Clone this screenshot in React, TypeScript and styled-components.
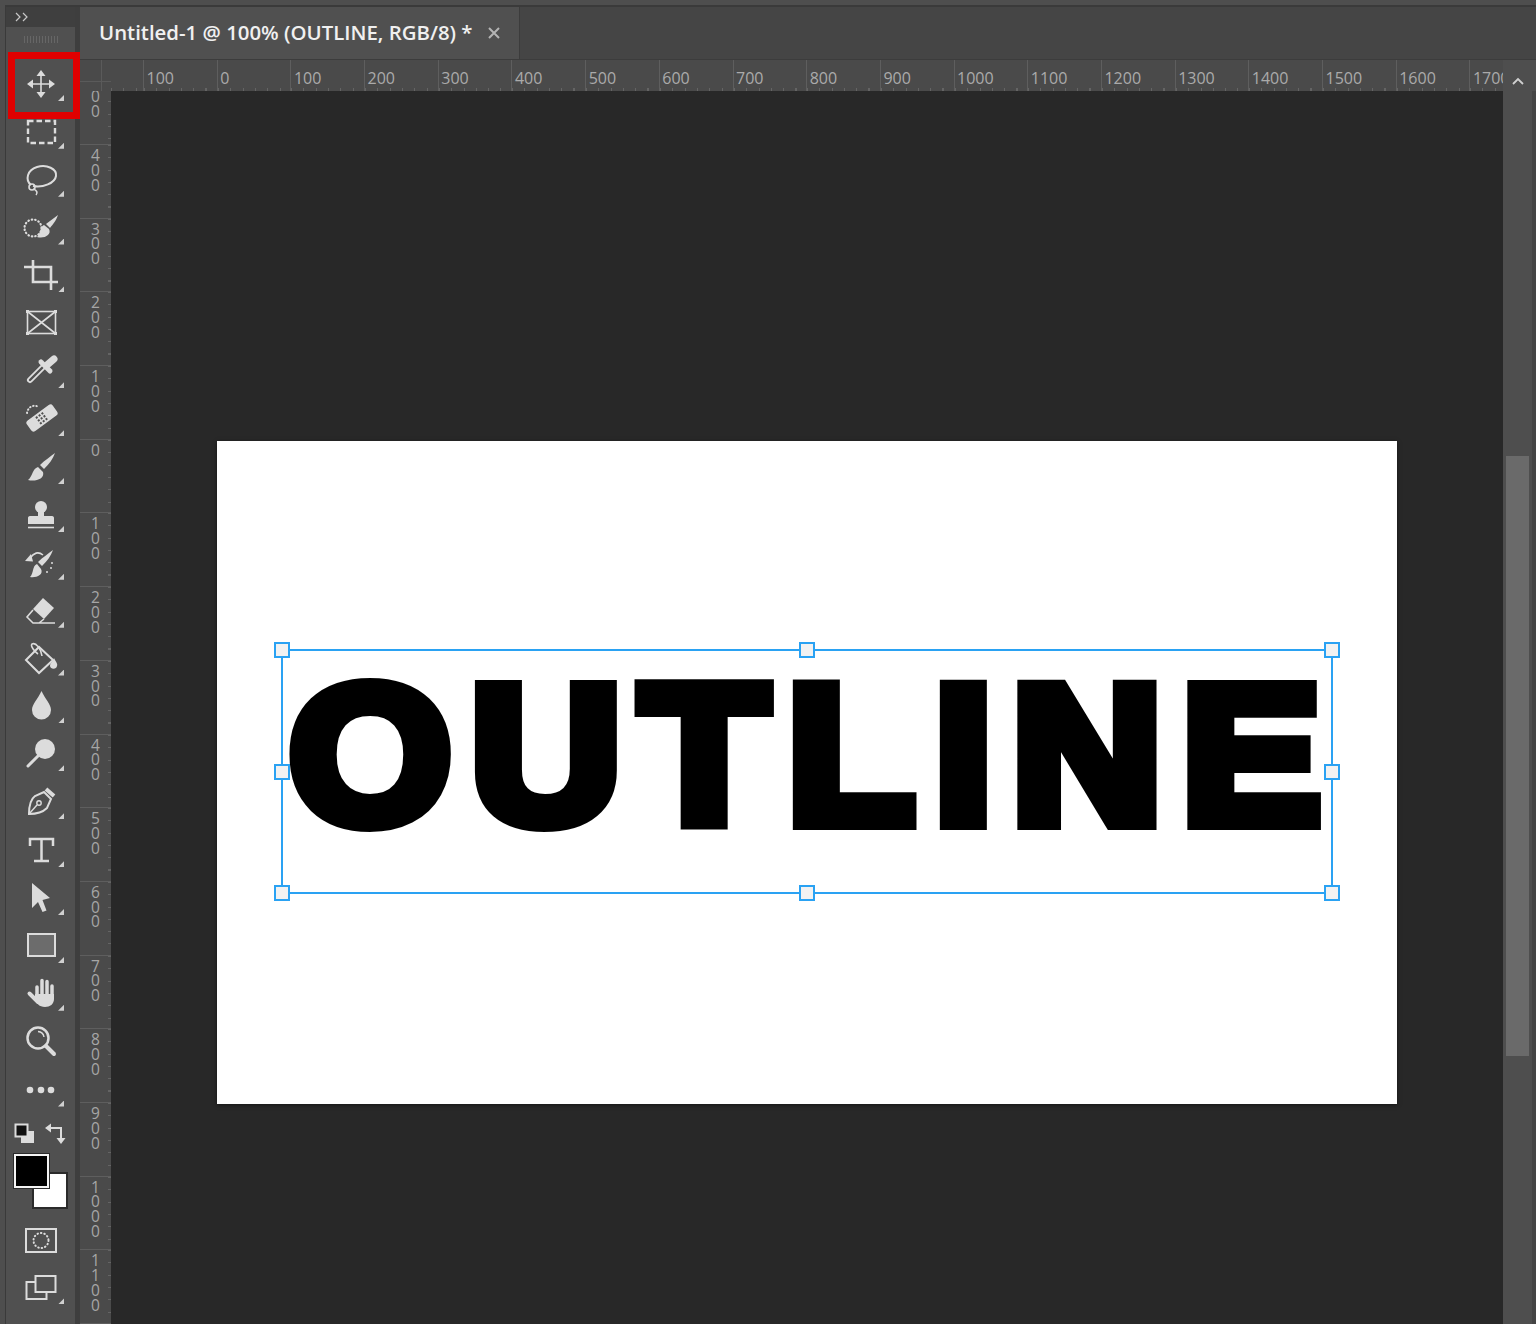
import React from "react";
import styled, { createGlobalStyle } from "styled-components";

const ink = "#dcdcdc";
const panel = "#505050";

const GlobalStyle = createGlobalStyle`
  html, body {
    margin: 0;
    padding: 0;
    background: #4e4e4e;
    font-family: "Open Sans", "Liberation Sans", sans-serif;
  }
`;

const Shell = styled.div`
  width: 1536px;
  height: 1324px;
  overflow: hidden;
  padding: 5px 0 0 5px;
  box-sizing: border-box;
  background: #4e4e4e;
`;

const Frame = styled.div`
  display: flex;
  height: 100%;
  border-top: 2px solid #3a3a3a;
  border-left: 1px solid #3a3a3a;
`;

const Toolbar = styled.aside`
  width: 69px;
  flex: none;
  background: ${panel};
  border-right: 5px solid #3e3e3e;
  display: flex;
  flex-direction: column;
`;

const ToolHeader = styled.div`
  height: 20px;
  flex: none;
  background: #3f3f3f;
  padding-left: 9px;
  box-sizing: border-box;
  display: flex;
  align-items: center;
`;

const Grip = styled.div`
  height: 33px;
  flex: none;
  display: flex;
  justify-content: center;
  padding-top: 9px;
  box-sizing: border-box;
  &::before {
    content: "";
    width: 34px;
    height: 7px;
    background: repeating-linear-gradient(90deg, #666 0 1px, transparent 1px 3px);
  }
`;

const Tool = styled.div<{ $more?: boolean; $selected?: boolean }>`
  position: relative;
  height: 47.9px;
  flex: none;
  display: flex;
  align-items: center;
  justify-content: center;
  &::after {
    content: "";
    display: ${(p) => (p.$more ? "block" : "none")};
    position: absolute;
    right: 11px;
    bottom: 7px;
    width: 6px;
    height: 6px;
    background: #d0d0d0;
    clip-path: polygon(100% 0, 100% 100%, 0 100%);
  }
  &::before {
    content: "";
    display: ${(p) => (p.$selected ? "block" : "none")};
    position: absolute;
    left: 2px;
    top: -8px;
    width: 72px;
    height: 67px;
    box-sizing: border-box;
    border: 7px solid #e00000;
    z-index: 3;
  }
`;

const Glyph = styled.svg`
  width: 36px;
  height: 36px;
  display: block;
`;

const ColorIcons = styled.div`
  height: 38px;
  flex: none;
  display: flex;
  align-items: center;
  justify-content: space-between;
  padding: 3px 9px 0 8px;
  box-sizing: border-box;
`;

const Swatches = styled.div`
  height: 58px;
  margin: 0 0 6px 8px;
  flex: none;
`;

const Swatch = styled.div<{ $back?: boolean }>`
  position: relative;
  box-sizing: border-box;
  width: ${(p) => (p.$back ? "36px" : "35px")};
  height: ${(p) => (p.$back ? "37px" : "34px")};
  margin: ${(p) => (p.$back ? "-16px 0 0 18px" : "2px 0 0 0")};
  z-index: ${(p) => (p.$back ? 1 : 2)};
  background: ${(p) => (p.$back ? "#fff" : "#000")};
  border: 2px solid ${(p) => (p.$back ? "#2b2b2b" : "#f4f4f4")};
  outline: ${(p) => (p.$back ? "none" : "1px solid #2b2b2b")};
`;

const Main = styled.main`
  flex: 1;
  min-width: 0;
  display: flex;
  flex-direction: column;
`;

const TabBar = styled.div`
  height: 53px;
  flex: none;
  background: #454545;
  display: flex;
  border-bottom: 1px solid #3c3c3c;
  box-sizing: border-box;
`;

const Tab = styled.div`
  width: 440px;
  box-sizing: border-box;
  background: #505050;
  border-right: 1px solid #3c3c3c;
  display: flex;
  align-items: center;
  padding: 0 18px 2px 19px;
  justify-content: space-between;
`;

const TabTitle = styled.span`
  color: #f0f0f0;
  font-size: 20.4px;
  font-weight: 600;
  white-space: nowrap;
`;

const TabClose = styled.svg`
  width: 14px;
  height: 14px;
  margin-top: 2px;
`;

const RulerRow = styled.div`
  height: 31px;
  flex: none;
  display: flex;
  background: #4a4a4a;
`;

const RulerCorner = styled.div`
  width: 31px;
  flex: none;
  background:
    linear-gradient(#5a5a5a, #5a5a5a) 21px 0 / 1px 100% no-repeat,
    linear-gradient(#5a5a5a, #5a5a5a) 0 21px / 100% 1px no-repeat;
`;

const RulerTrack = styled.div`
  flex: 1;
  min-width: 0;
  display: flex;
  overflow: hidden;
`;

const RulerCell = styled.div<{ $lead?: boolean }>`
  flex: none;
  width: ${(p) => (p.$lead ? "32px" : "73.7px")};
  box-sizing: border-box;
  padding: 5px 0 0 2.5px;
  color: #aaaaaa;
  font-size: 16px;
  line-height: 26px;
  border-left: ${(p) => (p.$lead ? "none" : "1px solid #5e5e5e")};
  background: repeating-linear-gradient(90deg, #646464 0 1px, transparent 1px 12.3px) 0 100% / 100% 3px no-repeat;
`;

const ScrollUp = styled.div`
  width: 33px;
  flex: none;
  background: #4e4e4e;
  padding: 9px 0 0 8px;
  box-sizing: border-box;
`;

const Work = styled.div`
  flex: 1;
  min-height: 0;
  display: flex;
`;

const VRuler = styled.div`
  width: 31px;
  flex: none;
  background: #4a4a4a;
  overflow: hidden;
`;

const VCell = styled.div<{ $lead?: boolean }>`
  height: ${(p) => (p.$lead ? "56px" : "73.7px")};
  margin-top: ${(p) => (p.$lead ? "-2px" : "0")};
  box-sizing: border-box;
  border-bottom: 1px solid #5e5e5e;
  display: flex;
  flex-direction: column;
  align-items: center;
  padding: ${(p) => (p.$lead ? "0" : "3px")} 0 0 0;
  background: repeating-linear-gradient(180deg, #646464 0 1px, transparent 1px 12.3px) 100% 0 / 3px 100% no-repeat;
`;

const VDigit = styled.span`
  display: block;
  color: #a6a6a6;
  font-size: 15.5px;
  line-height: 14.8px;
  height: 14.8px;
`;

const Canvas = styled.div`
  flex: 1;
  min-width: 0;
  background: #282828;
  display: flex;
  justify-content: center;
  align-items: flex-start;
  padding-top: 350px;
`;

const Doc = styled.div`
  width: 1180px;
  height: 663px;
  flex: none;
  background: #fff;
  box-sizing: border-box;
  padding: 208px 0 0 64px;
  box-shadow: 0 1px 4px rgba(0, 0, 0, 0.5);
`;

const TextBox = styled.div`
  position: relative;
  width: 1052px;
  height: 245px;
  box-sizing: border-box;
  border: 2px solid #2aa2f3;
`;

const Outline = styled.div`
  color: #000;
  font-family: "Liberation Sans", Arial, sans-serif;
  font-weight: 700;
  font-size: 194px;
  line-height: 208px;
  letter-spacing: 18.7px;
  white-space: nowrap;
  -webkit-text-stroke: 16px #000;
  transform: scaleX(1.07);
  transform-origin: 0 0;
  padding: 0 0 0 6px;
`;

const Handle = styled.span<{ $x: number; $y: number }>`
  position: absolute;
  left: calc(${(p) => p.$x * 50}% + ${(p) => p.$x - 1}px);
  top: calc(${(p) => p.$y * 50}% + ${(p) => p.$y - 1}px);
  width: 16px;
  height: 16px;
  margin: -8px 0 0 -8px;
  box-sizing: border-box;
  background: #f2f2f2;
  border: 2px solid #2aa2f3;
`;

const Scrollbar = styled.div`
  width: 33px;
  flex: none;
  box-sizing: border-box;
  background: #4e4e4e;
  border-right: 4px solid #444;
  padding: 365px 3px 0 3px;
`;

const Thumb = styled.div`
  height: 600px;
  background: #6a6a6a;
`;

const s = { fill: "none", stroke: ink, strokeWidth: 2 };
const f = { fill: ink };

const tools: { more: boolean; icon: React.ReactNode }[] = [
  {
    more: true,
    icon: (
      <>
        <path d="M18 6v24M6 18h24" {...s} strokeWidth={1.6} />
        <polygon points="18,4 13.5,10 22.5,10" {...f} />
        <polygon points="18,32 13.5,26 22.5,26" {...f} />
        <polygon points="4,18 10,13.5 10,22.5" {...f} />
        <polygon points="32,18 26,13.5 26,22.5" {...f} />
      </>
    ),
  },
  { more: true, icon: <rect x="5" y="7" width="27" height="22" {...s} strokeWidth={2.4} strokeDasharray="5.5 3" /> },
  {
    more: true,
    icon: (
      <>
        <path d="M8 23C2 18 4 8 14 5C24 2 34 7 33 14C32 21 20 26 10 24" {...s} />
        <circle cx="9" cy="25" r="3" {...s} strokeWidth={1.6} />
        <path d="M10 27C14 28 15 31 13 33" {...s} strokeWidth={1.6} />
      </>
    ),
  },
  {
    more: true,
    icon: (
      <>
        <circle cx="10" cy="18" r="8.5" {...s} strokeWidth={2.2} strokeLinecap="round" strokeDasharray="0.5 3" />
        <path d="M35 5C33 11 30 14 27 18L23 14C27 11 31 8 35 5Z" {...f} />
        <path d="M21 15C17 16 18 23 14 27C21 29 29 25 26 19Z" {...f} />
      </>
    ),
  },
  {
    more: true,
    icon: <path d="M0 10H27V33M9 3V25H34" {...s} strokeWidth={2.6} transform="translate(1 -1)" />,
  },
  {
    more: false,
    icon: (
      <>
        <rect x="4.5" y="6.5" width="28" height="22" {...s} strokeWidth={1.6} />
        <path d="M4.5 6.5L32.5 28.5M32.5 6.5L4.5 28.5" {...s} strokeWidth={1.6} />
        <path d="M3 5h3v3H3zM31 5h3v3h-3zM3 27h3v3H3zM31 27h3v3h-3z" {...f} />
      </>
    ),
  },
  {
    more: true,
    icon: (
      <>
        <path d="M7 27L20 14" stroke={ink} strokeWidth={6} strokeLinecap="round" />
        <path d="M7 27L20 14" stroke={panel} strokeWidth={2.4} strokeLinecap="round" />
        <path d="M18 9L27 18" stroke={ink} strokeWidth={5} strokeLinecap="round" />
        <path d="M24 12L31 6" stroke={ink} strokeWidth={7} strokeLinecap="round" />
      </>
    ),
  },
  {
    more: true,
    icon: (
      <>
        <path d="M4 12C5 6 10 3 16 6" {...s} strokeLinecap="round" strokeDasharray="0.5 2.8" />
        <g transform="rotate(-36 19 17)">
          <rect x="3" y="10.5" width="32" height="13" rx="3" {...f} />
          <path d="M14 13.5h10M14 17h10M14 20.5h10" stroke={panel} strokeWidth={2} strokeDasharray="2 1.5" />
        </g>
      </>
    ),
  },
  {
    more: true,
    icon: (
      <>
        <path d="M32 4C30 10 26 15 21 20L17 16C22 11 27 8 32 4Z" {...f} />
        <path d="M15 18C9 20 10 27 5 31C12 33 22 30 20 23Z" {...f} />
      </>
    ),
  },
  {
    more: true,
    icon: (
      <>
        <circle cx="18" cy="10" r="6" {...f} />
        <path d="M15 13h6v6h8c1.5 0 2 1 2 2v6H5v-6c0-1 .5-2 2-2h8z" {...f} />
        <path d="M5 30.5h26" {...s} strokeWidth={1.6} />
      </>
    ),
  },
  {
    more: true,
    icon: (
      <>
        <path d="M20 10C15 6 11 8 7 13" {...s} strokeWidth={1.6} />
        <polygon points="2,16 10,16.5 8,9" {...f} />
        <path d="M30 5C28 11 24 16 19 21L15 17C20 12 25 9 30 5Z" {...f} />
        <path d="M14 19C9 21 11 28 7 32C13 33 21 30 18 24Z" {...f} />
        <circle cx="29" cy="18" r="1" {...f} />
        <circle cx="28" cy="23" r="1" {...f} />
        <circle cx="24" cy="27" r="1" {...f} />
      </>
    ),
  },
  {
    more: true,
    icon: (
      <>
        <polygon points="20,5 31,15 21,26 10,16" {...f} />
        <path d="M10 17L4 24L10 30H16L21 26M10 30H32" {...s} strokeWidth={1.6} />
      </>
    ),
  },
  {
    more: true,
    icon: (
      <>
        <polygon points="3,19 16,6 30,19 16,32" {...s} />
        <path d="M19 15C18 8 13 1 9 3C7 5 12 11 15 13" {...s} strokeWidth={1.6} />
        <path d="M31 17C33 21 35 23 34 25A3.6 3.6 0 0 1 27 25C27 22 30 21 31 17Z" {...f} />
      </>
    ),
  },
  {
    more: true,
    icon: <path d="M18.5 2C15 10 9 15 9 21A9.5 9.5 0 0 0 28 21C28 15 22 10 18.5 2Z" {...f} />,
  },
  {
    more: true,
    icon: (
      <>
        <circle cx="22" cy="13" r="10" {...f} />
        <path d="M15 20L5 30" stroke={ink} strokeWidth={3} strokeLinecap="round" />
      </>
    ),
  },
  {
    more: true,
    icon: (
      <>
        <path d="M6 30C6 22 8 15 12 12L21 8L28 15L24 24C20 28 12 30 6 30Z" {...s} />
        <path d="M23 5L31 12" stroke={ink} strokeWidth={4} />
        <path d="M6 30L14 21" {...s} strokeWidth={1.4} />
        <circle cx="16" cy="19" r="2.2" {...s} strokeWidth={1.4} />
      </>
    ),
  },
  {
    more: true,
    icon: <path d="M7 14V7H30V14M18.5 7V29M11 29H26" {...s} strokeWidth={2.5} />,
  },
  {
    more: true,
    icon: <polygon points="9,3 27,18 19.5,20 23.5,30.5 19.5,32 15,22 9,28" {...f} />,
  },
  {
    more: true,
    icon: <rect x="5" y="6" width="27" height="22" fill="#6c6c6c" stroke={ink} strokeWidth={2} />,
  },
  {
    more: true,
    icon: (
      <>
        <path d="M14 20V11M19 20V4.5M24 20V5.5M29 22V10" stroke={ink} strokeWidth={3.5} strokeLinecap="round" />
        <path d="M12 18H31V23C31 28 27 31 22 31C16 31 14 27 12 25Z" {...f} />
        <path d="M6.5 17.5L15 26" stroke={ink} strokeWidth={4} strokeLinecap="round" />
      </>
    ),
  },
  {
    more: false,
    icon: (
      <>
        <circle cx="15" cy="14" r="10.5" {...s} strokeWidth={2.5} />
        <path d="M15 7.5A6.5 6.5 0 0 1 21 13" {...s} strokeWidth={1.4} />
        <path d="M23 22L31 30" stroke={ink} strokeWidth={4} strokeLinecap="round" />
      </>
    ),
  },
  {
    more: true,
    icon: (
      <>
        <circle cx="7" cy="18" r="3.3" {...f} />
        <circle cx="18" cy="18" r="3.3" {...f} />
        <circle cx="28" cy="18" r="3.3" {...f} />
      </>
    ),
  },
];

const topLabels = ["100", "0", "100", "200", "300", "400", "500", "600", "700", "800", "900", "1000", "1100", "1200", "1300", "1400", "1500", "1600", "1700"];
const sideLabels = ["400", "300", "200", "100", "0", "100", "200", "300", "400", "500", "600", "700", "800", "900", "1000", "1100"];
const handles: [number, number][] = [
  [0, 0], [1, 0], [2, 0],
  [0, 1], [2, 1],
  [0, 2], [1, 2], [2, 2],
];

const App = () => {
  return (
    <Shell>
      <GlobalStyle />
      <Frame>
        <Toolbar>
          <ToolHeader>
            <svg width="14" height="10" viewBox="0 0 14 10">
              <path d="M1 1L5 5L1 9M8 1L12 5L8 9" fill="none" stroke="#c8c8c8" strokeWidth="1.2" />
            </svg>
          </ToolHeader>
          <Grip />
          {tools.map((t, i) => (
            <Tool key={i} $more={t.more} $selected={i === 0}>
              <Glyph viewBox="0 0 36 36">{t.icon}</Glyph>
            </Tool>
          ))}
          <ColorIcons>
            <svg width="22" height="22" viewBox="0 0 22 22">
              <rect x="7" y="8" width="13" height="12" fill={ink} />
              <rect x="1.5" y="1.5" width="12" height="12" fill="#111" stroke={ink} strokeWidth="2" />
            </svg>
            <svg width="22" height="22" viewBox="0 0 22 22">
              <path d="M6 5H17V16" {...s} strokeWidth={2} />
              <polygon points="1,5 7,0.5 7,9.5" {...f} />
              <polygon points="17,21 12.5,15 21.5,15" {...f} />
            </svg>
          </ColorIcons>
          <Swatches>
            <Swatch />
            <Swatch $back />
          </Swatches>
          <Tool>
            <Glyph viewBox="0 0 36 36">
              <rect x="3" y="7" width="30" height="23" {...s} />
              <circle cx="18" cy="18.5" r="7.5" {...s} strokeLinecap="round" strokeDasharray="0.5 3" />
            </Glyph>
          </Tool>
          <Tool $more>
            <Glyph viewBox="0 0 36 36">
              <rect x="3.5" y="13" width="20" height="17" {...s} />
              <rect x="12.5" y="7" width="20" height="16" fill="#505050" stroke={ink} strokeWidth={2} />
            </Glyph>
          </Tool>
        </Toolbar>

        <Main>
          <TabBar>
            <Tab>
              <TabTitle>Untitled-1 @ 100% (OUTLINE, RGB/8) *</TabTitle>
              <TabClose viewBox="0 0 14 14">
                <path d="M2 2L12 12M12 2L2 12" stroke="#b4b4b4" strokeWidth="2" />
              </TabClose>
            </Tab>
          </TabBar>

          <RulerRow>
            <RulerCorner />
            <RulerTrack>
              <RulerCell $lead />
              {topLabels.map((label, i) => (
                <RulerCell key={i}>{label}</RulerCell>
              ))}
            </RulerTrack>
            <ScrollUp>
              <svg width="14" height="10" viewBox="0 0 14 10">
                <path d="M2 8L7 3L12 8" fill="none" stroke="#d0d0d0" strokeWidth="1.8" />
              </svg>
            </ScrollUp>
          </RulerRow>

          <Work>
            <VRuler>
              <VCell $lead>
                <VDigit>0</VDigit>
                <VDigit>0</VDigit>
              </VCell>
              {sideLabels.map((label, i) => (
                <VCell key={i}>
                  {label.split("").map((d, j) => (
                    <VDigit key={j}>{d}</VDigit>
                  ))}
                </VCell>
              ))}
            </VRuler>
            <Canvas>
              <Doc>
                <TextBox>
                  <Outline>OUTLINE</Outline>
                  {handles.map(([x, y]) => (
                    <Handle key={`${x}-${y}`} $x={x} $y={y} />
                  ))}
                </TextBox>
              </Doc>
            </Canvas>
            <Scrollbar>
              <Thumb />
            </Scrollbar>
          </Work>
        </Main>
      </Frame>
    </Shell>
  );
};

export default App;
